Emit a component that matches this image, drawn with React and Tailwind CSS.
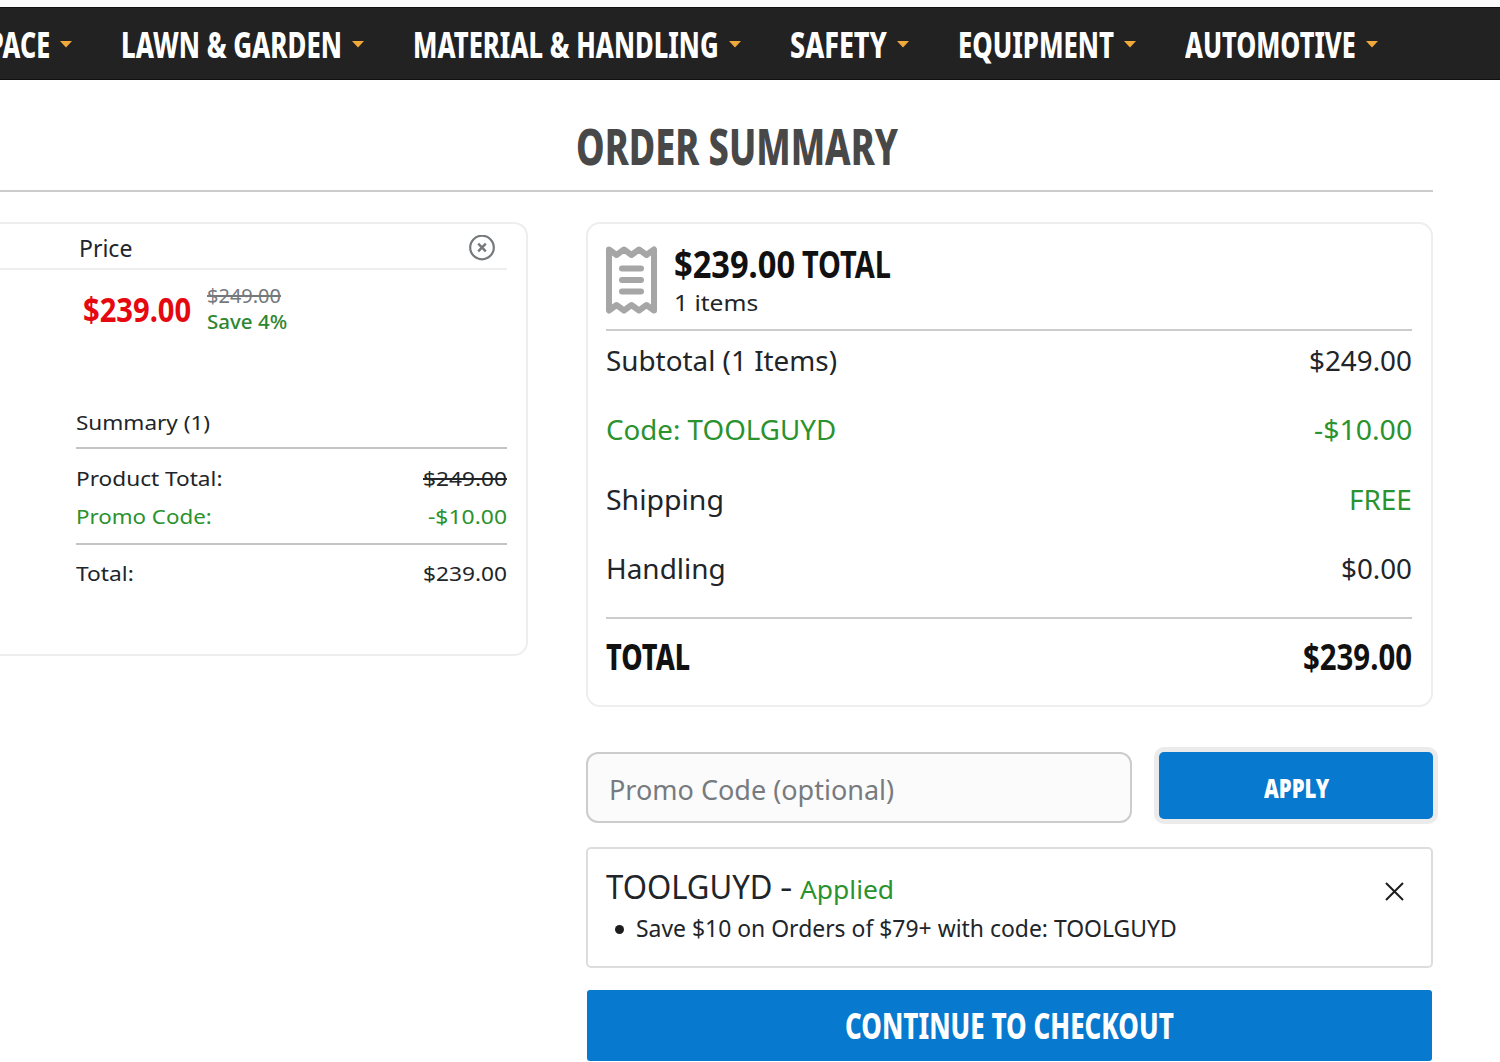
import React, { useLayoutEffect, useRef, useState } from 'react';

const navItems = [
  { label: 'PACE', width: 62 },
  { label: 'LAWN & GARDEN', width: 221 },
  { label: 'MATERIAL & HANDLING', width: 305.5 },
  { label: 'SAFETY', width: 97 },
  { label: 'EQUIPMENT', width: 156 },
  { label: 'AUTOMOTIVE', width: 171 },
];

const lines = [
  { label: 'Subtotal (1 Items)', lw: 231, value: '$249.00', vw: 103 },
  { label: 'Code: TOOLGUYD', lw: 230, value: '-$10.00', vw: 98, labelGreen: true, green: true },
  { label: 'Shipping', lw: 118, value: 'FREE', vw: 63, green: true },
  { label: 'Handling', lw: 120, value: '$0.00', vw: 71 },
];

function Fit({ width, className = '', strike = false, children }) {
  const ref = useRef(null);
  const [scale, setScale] = useState(1);

  useLayoutEffect(() => {
    setScale(width / ref.current.offsetWidth);
  }, [width]);

  return (
    <span className={`block shrink-0 ${className}`} style={{ width }}>
      <span
        ref={ref}
        className={`inline-block whitespace-nowrap origin-left ${strike ? 'line-through decoration-2' : ''}`}
        style={{ transform: `scaleX(${scale})` }}
      >
        {children}
      </span>
    </span>
  );
}

function ReceiptIcon() {
  return (
    <svg width="51" height="68" viewBox="0 0 51 68" fill="none" stroke="#a6a6a6" aria-hidden="true">
      <path
        d="M3 3.5 L10.5 9 L18 3.5 L25.5 9 L33 3.5 L40.5 9 L48 3.5 V64.5 L40.5 59 L33 64.5 L25.5 59 L18 64.5 L10.5 59 L3 64.5 Z"
        strokeWidth="6"
        strokeLinejoin="round"
      />
      <path d="M16 22.5 H35 M16 34 H35 M16 45.5 H35" strokeWidth="6" strokeLinecap="round" />
    </svg>
  );
}

function NavBar() {
  return (
    <nav className="h-[73px] bg-[#222222] border-y border-[#111111] pt-0.5 flex items-center gap-[49px] -ml-3 overflow-hidden">
      {navItems.map((item) => (
        <div key={item.label} className="flex items-center gap-2.5 shrink-0">
          <Fit width={item.width} className="font-stretch-condensed font-extrabold text-[35px] leading-[48px] text-white">{item.label}</Fit>
          <svg width="12" height="7" viewBox="0 0 12 7" fill="#f0a93b" aria-hidden="true"><path d="M0 0 H12 L6 6.5 Z" /></svg>
        </div>
      ))}
    </nav>
  );
}

function ProductCard() {
  return (
    <section className="w-[544px] h-[434px] -ml-4 shrink-0 border-2 border-[#eeeeee] rounded-[14px] pr-[19px]">
      <div className="h-[46px] pt-1 border-b-2 border-[#eeeeee] flex items-center justify-between pl-[93px] pr-3">
        <Fit width={53} className="text-[23px] leading-8">Price</Fit>
        <svg width="26" height="26" viewBox="0 0 26 26" fill="none" stroke="#75797c" aria-hidden="true">
          <circle cx="13" cy="12.5" r="11.8" strokeWidth="2.2" />
          <path d="M9.2 8.7 L16.8 16.3 M16.8 8.7 L9.2 16.3" strokeWidth="2.4" />
        </svg>
      </div>

      <div className="mt-[13px] pl-[97px] flex items-center gap-4">
        <Fit width={108} className="font-stretch-condensed font-bold text-[34px] leading-[52px] text-[#e5090f]">$239.00</Fit>
        <div className="leading-[26px] text-[20px]">
          <Fit width={74} strike className="text-[#75797c]">$249.00</Fit>
          <Fit width={80} className="text-[#2e8630] font-medium">Save 4%</Fit>
        </div>
      </div>

      <div className="mt-16 ml-[90px] text-[20px] leading-[38px]">
        <div className="h-[50px] border-b-2 border-[#c4c4c4] flex items-center">
          <Fit width={134}>Summary (1)</Fit>
        </div>
        <div className="pt-[11px] pb-[7px] border-b-2 border-[#c4c4c4]">
          <div className="flex justify-between">
            <Fit width={147}>Product Total:</Fit>
            <Fit width={84} strike>$249.00</Fit>
          </div>
          <div className="flex justify-between text-[#2a922e]">
            <Fit width={136}>Promo Code:</Fit>
            <Fit width={79}>-$10.00</Fit>
          </div>
        </div>
        <div className="pt-2.5 flex justify-between">
          <Fit width={58}>Total:</Fit>
          <Fit width={84}>$239.00</Fit>
        </div>
      </div>
    </section>
  );
}

function TotalsCard() {
  return (
    <section className="h-[485px] border-2 border-[#eeeeee] rounded-[14px] pl-[18px] pr-[19px]">
      <div className="h-[107px] pt-[22px] border-b-2 border-[#cccccc] flex gap-[17px]">
        <ReceiptIcon />
        <div className="-mt-[5px]">
          <div className="flex gap-[7px] font-stretch-condensed font-bold text-[38px] leading-[44px] text-[#111111]">
            <Fit width={121}>$239.00</Fit>
            <Fit width={89}>TOTAL</Fit>
          </div>
          <Fit width={84} className="text-[22.5px] leading-9">1 items</Fit>
        </div>
      </div>

      <div className="h-[288px] pt-3 border-b-2 border-[#cccccc] flex flex-col gap-[33.3px] text-[27px] leading-9">
        {lines.map((line) => (
          <div key={line.label} className="flex justify-between">
            <Fit width={line.lw} className={line.labelGreen ? 'text-[#2a922e]' : ''}>{line.label}</Fit>
            <Fit width={line.vw} className={line.green ? 'text-[#2a922e]' : ''}>{line.value}</Fit>
          </div>
        ))}
      </div>

      <div className="pt-[13px] flex justify-between font-stretch-condensed font-extrabold text-[35px] leading-[50px] text-[#111111]">
        <Fit width={84}>TOTAL</Fit>
        <Fit width={109} className="font-bold">$239.00</Fit>
      </div>
    </section>
  );
}

function PromoForm() {
  return (
    <div className="mt-[45px] flex items-start justify-between">
      <div className="w-[546px] h-[71px] border-2 border-[#cccccc] rounded-[12px] bg-[#fbfbfb] px-[21px] pt-1 flex items-center">
        <Fit width={285} className="text-[27px] leading-9 text-[#777b80]">Promo Code (optional)</Fit>
      </div>
      <button className="w-[274px] h-[67px] rounded-[5px] bg-[#0779ce] ring-5 ring-[#ebebeb] pt-1 flex items-center justify-center">
        <Fit width={65} className="font-stretch-condensed font-black text-[26px] leading-9 text-white text-left">APPLY</Fit>
      </button>
    </div>
  );
}

function AppliedCode() {
  return (
    <div className="mt-6 h-[121px] border-2 border-[#dddddd] rounded-[5px] pl-[18px] pr-[27px] pt-[17px] flex justify-between">
      <div>
        <div className="flex items-baseline leading-[42px]">
          <Fit width={166} className="text-[32px]">TOOLGUYD</Fit>
          <Fit width={12} className="text-[32px] ml-2">-</Fit>
          <Fit width={94} className="text-[25px] text-[#2a922e] ml-2">Applied</Fit>
        </div>
        <div className="-mt-[3px] flex items-center gap-3 ml-[9px]">
          <span className="size-[9px] rounded-full bg-[#1d1d1d] mt-0.5" />
          <Fit width={541} className="text-[23px] leading-[42px]">Save $10 on Orders of $79+ with code: TOOLGUYD</Fit>
        </div>
      </div>
      <svg width="19" height="19" viewBox="0 0 19 19" fill="none" stroke="#1d1d1d" strokeWidth="2" className="mt-4" aria-hidden="true">
        <path d="M1 1 L18 18 M18 1 L1 18" />
      </svg>
    </div>
  );
}

export default function App() {
  return (
    <main className="w-[1500px] h-[1062px] bg-white overflow-hidden text-[#212529] font-['Noto_Sans','Open_Sans',sans-serif]">
      <div className="h-[7px] bg-[#fafafa]" />
      <NavBar />
      <header className="w-[1433px] h-28 pt-[22px] border-b-2 border-[#cccccc] pl-[576px] flex items-center">
        <h1><Fit width={322} className="font-stretch-condensed font-extrabold text-[49px] leading-[60px] text-[#484848]">ORDER SUMMARY</Fit></h1>
      </header>

      <div className="mt-[30px] flex gap-[58px]">
        <ProductCard />
        <div className="w-[847px] shrink-0">
          <TotalsCard />
          <PromoForm />
          <AppliedCode />
          <button className="mt-[22px] mx-px w-[845px] h-[71px] rounded-[3px] bg-[#0779ce] flex items-center justify-center">
            <Fit width={329} className="font-stretch-condensed font-extrabold text-[35px] leading-[48px] text-white text-left">CONTINUE TO CHECKOUT</Fit>
          </button>
        </div>
      </div>
    </main>
  );
}
